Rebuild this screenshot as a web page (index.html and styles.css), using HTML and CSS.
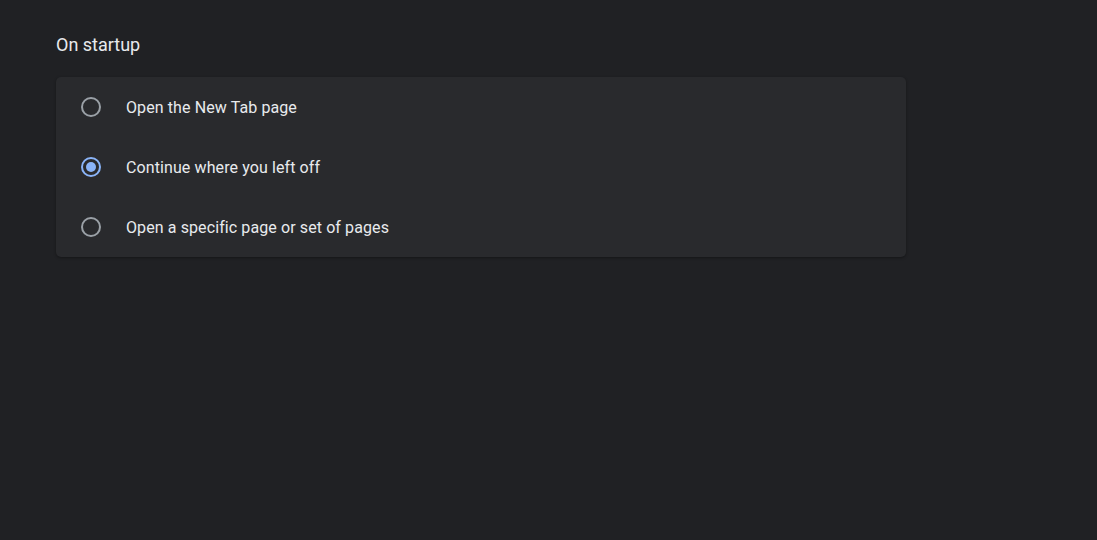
FILE: index.html
```html
<!DOCTYPE html>
<html>
<head>
<meta charset="utf-8">
<link rel="stylesheet" href="styles.css">
</head>
<body>
<main class="page">
  <h2 class="section-title">On startup</h2>
  <div class="card">
    <label class="row">
      <span class="radio"></span>
      <span class="label">Open the New Tab page</span>
    </label>
    <label class="row">
      <span class="radio checked"></span>
      <span class="label">Continue where you left off</span>
    </label>
    <label class="row">
      <span class="radio"></span>
      <span class="label">Open a specific page or set of pages</span>
    </label>
  </div>
</main>
</body>
</html>
```
FILE: styles.css
```css
html, body {
  margin: 0;
  padding: 0;
  background: #202124;
  height: 100%;
}
body {
  font-family: Roboto, "Liberation Sans", sans-serif;
  color: #e8eaed;
}
.page {
  padding: 33px 0 0 56px;
  width: 850px;
}
.section-title {
  margin: 0 0 20px 0;
  font-size: 18px;
  font-weight: 400;
  line-height: 24px;
  color: #e8eaed;
}
.card {
  background: #292a2d;
  border-radius: 5px;
  box-shadow: 0 1px 3px rgba(0,0,0,0.35);
  display: flex;
  flex-direction: column;
}
.row {
  height: 60px;
  display: flex;
  align-items: center;
  padding-left: 25px;
  gap: 25px;
}
.radio {
  width: 20px;
  height: 20px;
  box-sizing: border-box;
  border: 2px solid #9aa0a6;
  border-radius: 50%;
  display: flex;
  align-items: center;
  justify-content: center;
  flex: none;
}
.radio.checked {
  border-color: #8ab4f8;
}
.radio.checked::after {
  content: "";
  width: 10px;
  height: 10px;
  border-radius: 50%;
  background: #8ab4f8;
}
.label {
  font-size: 16px;
  font-weight: 400;
  letter-spacing: 0.1px;
}
```
